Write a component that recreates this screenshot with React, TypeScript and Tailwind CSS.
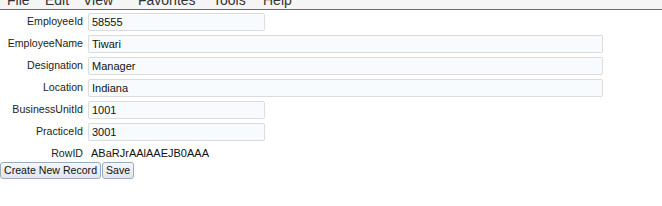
const rows = [
  { label: "EmployeeId", value: "58555", wide: false },
  { label: "EmployeeName", value: "Tiwari", wide: true },
  { label: "Designation", value: "Manager", wide: true },
  { label: "Location", value: "Indiana", wide: true },
  { label: "BusinessUnitId", value: "1001", wide: false },
  { label: "PracticeId", value: "3001", wide: false },
];

const menu = [
  { name: "File", w: "w-[38px]" },
  { name: "Edit", w: "w-[38px]" },
  { name: "View", w: "w-[55px]" },
  { name: "Favorites", w: "w-[75px]" },
  { name: "Tools", w: "w-[50px]" },
  { name: "Help", w: "w-[40px]" },
];

export default function App() {
  return (
    <div className="w-[662px] h-[206px] bg-white text-[#222] font-['Liberation_Sans',Arial,sans-serif] text-[11px]">
      <div className="h-[10px] overflow-hidden bg-[#f5f5f5] border-b border-[#6b6b6b]">
        <div className="flex -mt-[7px] pl-[7px] text-[14px] leading-[14px] text-[#333]">
          {menu.map((m) => (
            <span key={m.name} className={m.w}>
              {m.name}
            </span>
          ))}
        </div>
      </div>

      <div className="flex flex-col gap-[4px] pt-[3px]">
        {rows.map((r) => (
          <div key={r.label} className="flex items-center gap-[5px] h-[18px]">
            <div className="w-[83px] text-right text-[10.6px]">{r.label}</div>
            <div
              className={`h-[18px] flex items-center px-[3px] bg-[#f7fbfe] border border-[#dcdcdc] rounded-[2px] text-[#111] ${
                r.wide ? "w-[515px]" : "w-[177px]"
              }`}
            >
              {r.value}
            </div>
          </div>
        ))}
        <div className="flex items-center gap-[8px] h-[17px]">
          <div className="w-[83px] text-right text-[10.6px]">RowID</div>
          <div className="text-[#111]">ABaRJrAAlAAEJB0AAA</div>
        </div>
      </div>

      <div className="flex gap-[1px]">
        <button className="h-[17px] px-[3px] text-[10.6px] leading-none text-[#111] border border-[#9aabbd] rounded-[3px] bg-gradient-to-b from-[#f4f7fa] to-[#dfe6ec]">
          Create New Record
        </button>
        <button className="h-[17px] px-[3px] text-[10.6px] leading-none text-[#111] border border-[#9aabbd] rounded-[3px] bg-gradient-to-b from-[#f4f7fa] to-[#dfe6ec]">
          Save
        </button>
      </div>
    </div>
  );
}
